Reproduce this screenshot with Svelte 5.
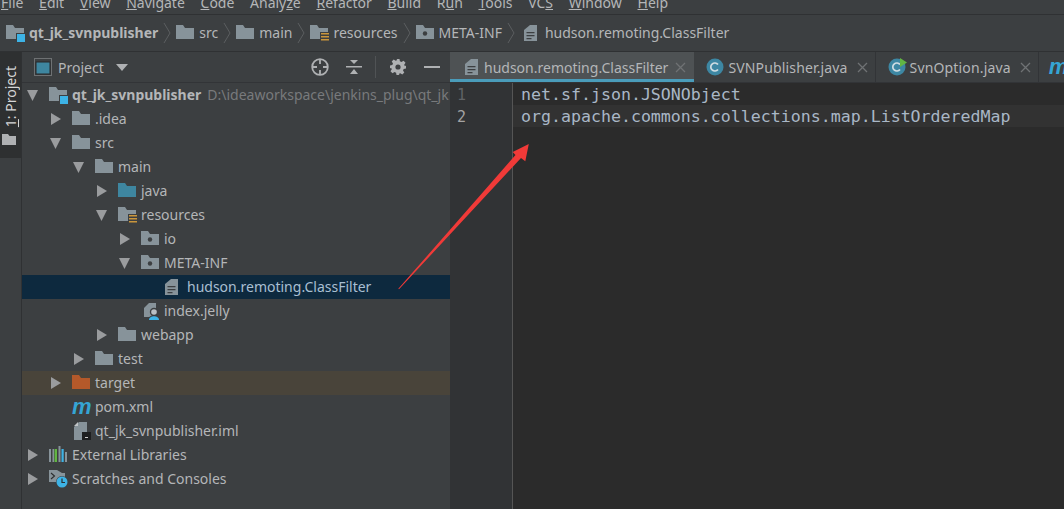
<script>
	// each entry: text before the mnemonic, the mnemonic, text after it
	const menus = [
		['', 'F', 'ile'], ['', 'E', 'dit'], ['', 'V', 'iew'], ['', 'N', 'avigate'], ['', 'C', 'ode'], ['Analy', 'z', 'e'],
		['', 'R', 'efactor'], ['', 'B', 'uild'], ['R', 'u', 'n'], ['', 'T', 'ools'], ['VC', 'S', ''], ['', 'W', 'indow'], ['', 'H', 'elp']
	];

	const crumbs = [
		{ icon: 'module', label: 'qt_jk_svnpublisher', bold: true },
		{ icon: 'folder', label: 'src' },
		{ icon: 'folder', label: 'main' },
		{ icon: 'resources', label: 'resources' },
		{ icon: 'package', label: 'META-INF' },
		{ icon: 'file', label: 'hudson.remoting.ClassFilter' }
	];

	const tree = [
		{ depth: 0, open: true, icon: 'module', label: 'qt_jk_svnpublisher', bold: true, path: 'D:\\ideaworkspace\\jenkins_plug\\qt_jk' },
		{ depth: 1, open: false, icon: 'folder', label: '.idea' },
		{ depth: 1, open: true, icon: 'folder', label: 'src' },
		{ depth: 2, open: true, icon: 'folder', label: 'main' },
		{ depth: 3, open: false, icon: 'java', label: 'java' },
		{ depth: 3, open: true, icon: 'resources', label: 'resources' },
		{ depth: 4, open: false, icon: 'package', label: 'io' },
		{ depth: 4, open: true, icon: 'package', label: 'META-INF' },
		{ depth: 5, icon: 'file', label: 'hudson.remoting.ClassFilter', kind: 'selected' },
		{ depth: 4, icon: 'jelly', label: 'index.jelly' },
		{ depth: 3, open: false, icon: 'folder', label: 'webapp' },
		{ depth: 2, open: false, icon: 'folder', label: 'test' },
		{ depth: 1, open: false, icon: 'target', label: 'target', kind: 'excluded' },
		{ depth: 1, icon: 'maven', label: 'pom.xml' },
		{ depth: 1, icon: 'iml', label: 'qt_jk_svnpublisher.iml' },
		{ depth: 0, open: false, icon: 'libs', label: 'External Libraries' },
		{ depth: 0, open: false, icon: 'scratch', label: 'Scratches and Consoles' }
	];

	const tabs = [
		{ icon: 'file', label: 'hudson.remoting.ClassFilter', active: true },
		{ icon: 'class', label: 'SVNPublisher.java' },
		{ icon: 'classrun', label: 'SvnOption.java' }
	];

	const lines = ['net.sf.json.JSONObject', 'org.apache.commons.collections.map.ListOrderedMap'];
</script>

{#snippet folderShape(fill)}
	<path d="M0 1h7l2 3h9v11H0z" fill={fill} />
{/snippet}

{#snippet icon(name)}
	{#if name === 'maven'}
		<span class="maven">m</span>
	{:else}
		<svg class="ico" width="20" height="18" viewBox="0 0 20 18">
			{#if name === 'folder'}
				{@render folderShape('#87939a')}
			{:else if name === 'java'}
				{@render folderShape('#3e86a0')}
			{:else if name === 'target'}
				{@render folderShape('#b4592a')}
			{:else if name === 'module'}
				{@render folderShape('#87939a')}
				<rect x="10" y="9" width="9" height="9" fill="#3c3f41" />
				<rect x="11" y="10" width="8" height="8" fill="#3db3e6" />
			{:else if name === 'resources'}
				{@render folderShape('#87939a')}
				<rect x="10" y="8" width="10" height="10" fill="#3c3f41" />
				<path d="M11 9h8v1.5h-8zM11 12h8v1.5h-8zM11 15h8v1.5h-8z" fill="#c9963c" />
			{:else if name === 'package'}
				{@render folderShape('#87939a')}
				<circle cx="9" cy="9.5" r="2.2" fill="#3c3f41" />
			{:else if name === 'file'}
				<path d="M7 1h7v16H1V6z" fill="#87939a" />
				<path d="M3.500 8h8v1.300h-8zM3.500 11h8v1.300h-8zM3.500 14h5v1.300h-5z" fill="#3c3f41" />
			{:else if name === 'jelly'}
				<path d="M8 1h7v14H3V6z" fill="#87939a" />
				<circle cx="13" cy="10" r="4.200" fill="#3c3f41" />
				<circle cx="13" cy="10" r="2.800" fill="#b9c0c4" />
				<path d="M7 18c0-6.500 12-6.500 12 0z" fill="#3c3f41" />
				<path d="M8 18c0-5 10-5 10 0z" fill="#3db3e6" />
			{:else if name === 'iml'}
				<path d="M7 0h8v18H2V5z" fill="#87939a" />
				<path d="M6 0v4H2z" fill="#c1c5c8" />
				<rect x="10" y="10" width="9" height="8" fill="#1e1f20" />
				<rect x="13" y="15" width="3" height="1" fill="#ccc" />
			{:else if name === 'libs'}
				<path d="M0 3h2v13H0zM3.500 3H5v13H3.500zM9.500 0h2v16h-2zM16 6h2v10h-2z" fill="#87939a" />
				<path d="M5.500 3H8v13H5.500z" fill="#62b543" />
				<path d="M12.500 3h2.200v13h-2.200z" fill="#3db3e6" />
			{:else if name === 'scratch'}
				<path d="M0 0h8l5 3h3v9H0z" fill="#87939a" />
				<path d="M2 3l3.500 3L2 9" fill="none" stroke="#2b2d2e" stroke-width="1.100" />
				<circle cx="13" cy="12" r="6" fill="#3c3f41" />
				<circle cx="13" cy="12" r="5.500" fill="#3db3e6" />
				<path d="M13 8.500V12.500h3" fill="none" stroke="#2b2d2e" stroke-width="1.200" />
			{:else if name === 'class' || name === 'classrun'}
				<circle cx="9" cy="9" r="8.500" fill="#3d87a3" />
				<path d="M12 6.600a4 4 0 1 0 0 4.800" fill="none" stroke="#cfdde3" stroke-width="1.700" />
				{#if name === 'classrun'}
					<path d="M12 0l7 4.500-7 4.500z" fill="#62b543" />
				{/if}
			{/if}
		</svg>
	{/if}
{/snippet}

<div class="ide">
	<nav class="menu">
		{#each menus as m}
			<span>{m[0]}<u>{m[1]}</u>{m[2]}</span>
		{/each}
	</nav>

	<div class="crumbs">
		{#each crumbs as c, i}
			{#if i > 0}
				<svg class="chev" width="8" height="22" viewBox="0 0 8 22"><path d="M1 1l6 10-6 10" fill="none" stroke="#5b5e60" /></svg>
			{/if}
			<span class="crumb" class:bold={c.bold}>{@render icon(c.icon)}{c.label}</span>
		{/each}
	</div>

	<div class="body">
		<aside class="stripe">
			<div class="stripe-active">
				<span class="vert"><u>1</u>: Project</span>
				<svg width="14" height="11" viewBox="0 0 14 11"><path d="M0 0h6l1.500 2H14v9H0z" fill="#afb1b3" /></svg>
			</div>
		</aside>

		<section class="panel">
			<header class="panel-head">
				<svg width="18" height="18" viewBox="0 0 18 18">
					<rect x="0.500" y="0.500" width="17" height="17" fill="none" stroke="#6e7173" />
					<rect x="2" y="4" width="14" height="12" fill="#3e86a0" stroke="#26292b" />
				</svg>
				<span class="panel-title">Project</span>
				<svg class="caret" width="12" height="7" viewBox="0 0 12 7"><path d="M0 0h12L6 7z" fill="#afb1b3" /></svg>
				<div class="panel-tools">
					<svg class="locate" width="18" height="18" viewBox="0 0 18 18" fill="none" stroke="#afb1b3" stroke-width="1.800">
						<circle cx="9" cy="9" r="7.800" />
						<path d="M9 1v5M9 12v5M1 9h5M12 9h5" />
					</svg>
					<svg width="16" height="16" viewBox="0 0 16 16" fill="#afb1b3">
						<path d="M0 7h16v1.500H0zM4 1h8L8 5zM8 10l4 5H4z" />
					</svg>
					<i class="tool-sep"></i>
					<svg class="gear" width="16" height="16" viewBox="0 0 16 16">
						<path d="M6.500 0h3l.4 2.300 1.600.7 2-1.300 2 2-1.300 2 .7 1.600L16 6.500v3l-2.300.4-.7 1.600 1.300 2-2 2-2-1.300-1.600.7L9.500 16h-3l-.4-2.300-1.600-.7-2 1.300-2-2 1.300-2-.7-1.600L0 9.500v-3l2.300-.4.7-1.600-1.300-2 2-2 2 1.300 1.600-.7z" fill="#afb1b3" />
						<circle cx="8" cy="8" r="2.600" fill="#3c3f41" />
					</svg>
					<svg width="16" height="16" viewBox="0 0 16 16"><rect y="7" width="16" height="2" fill="#afb1b3" /></svg>
				</div>
			</header>

			<ul class="tree">
				{#each tree as row}
					<li class="row {row.kind ?? ''}" style="padding-left: {row.depth * 23}px">
						<span class="arrow">
							{#if row.open === true}
								<svg width="12" height="11" viewBox="0 0 12 11"><path d="M0 0h11L5.500 11z" fill="#9a9c9e" /></svg>
							{:else if row.open === false}
								<svg width="12" height="12" viewBox="0 0 12 12"><path d="M1 0l10 6-10 6z" fill="#9a9c9e" /></svg>
							{/if}
						</span>
						<span class="row-icon">{@render icon(row.icon)}</span>
						<span class="row-label" class:bold={row.bold}>{row.label}</span>
						{#if row.path}<span class="row-label row-path">{row.path}</span>{/if}
					</li>
				{/each}
			</ul>
		</section>

		<section class="editor">
			<div class="tabs">
				{#each tabs as t}
					<div class="tab" class:active={t.active}>
						{@render icon(t.icon)}
						<span>{t.label}</span>
						<svg class="close" width="11" height="11" viewBox="0 0 11 11"><path d="M1 1l9 9M10 1l-9 9" stroke="#6f7274" stroke-width="1.300" /></svg>
					</div>
				{/each}
				<div class="tab-more"><span class="maven">m</span></div>
			</div>
			<div class="code">
				<div class="gutter">
					{#each lines as _, i}
						<div class="num" class:current={i === 1}>{i + 1}</div>
					{/each}
				</div>
				<div class="lines">
					{#each lines as line, i}
						<div class="line" class:current={i === 1}>{line}</div>
					{/each}
				</div>
			</div>
		</section>
	</div>

	<svg class="arrow-mark" width="1064" height="509" viewBox="0 0 1064 509">
		<path d="M398.300 288.800L515.500 155 512.700 152 528.800 144 525.300 161.300 521 158 399 289.300z" fill="#f03a38" />
	</svg>
</div>

<style>
	:global(body) {
		margin: 0;
		background: #3c3f41;
	}
	.ide {
		position: relative;
		width: 1064px;
		height: 509px;
		overflow: hidden;
		display: flex;
		flex-direction: column;
		background: #3c3f41;
		color: #b4b6b8;
		font-family: 'Noto Sans', sans-serif;
		font-size: 14px;
	}
	.menu {
		height: 14px;
		flex: none;
		display: flex;
		gap: 15.7px;
		padding-left: 1px;
		border-bottom: 1px solid #2f3133;
		overflow: hidden;
		line-height: 14px;
	}
	.menu span {
		margin-top: -4px;
		white-space: nowrap;
	}
	.crumbs {
		height: 36px;
		flex: none;
		display: flex;
		align-items: center;
		gap: 5px;
		padding-left: 6px;
		border-bottom: 1px solid #2f3133;
		white-space: nowrap;
	}
	.crumb {
		display: flex;
		align-items: center;
		gap: 3px;
		padding-bottom: 1px;
	}
	.crumb:last-child {
		margin-left: 3px;
		gap: 2px;
	}
	.bold {
		font-weight: 700;
	}
	.chev {
		flex: none;
	}
	.body {
		flex: 1;
		display: flex;
		min-height: 0;
	}
	.stripe {
		width: 21px;
		flex: none;
		border-right: 1px solid #2f3133;
	}
	.stripe-active {
		height: 106px;
		background: #2e3031;
		display: flex;
		flex-direction: column;
		align-items: center;
		padding-top: 14px;
		box-sizing: border-box;
		gap: 7px;
		color: #d5d6d7;
		font-size: 14px;
	}
	.stripe-active svg {
		margin-left: -3px;
	}
	.vert {
		writing-mode: vertical-rl;
		transform: rotate(180deg);
		line-height: 16px;
	}
	.panel {
		width: 428px;
		flex: none;
		overflow: hidden;
	}
	.panel-head {
		height: 30px;
		display: flex;
		align-items: center;
		padding-left: 12px;
		border-bottom: 1px solid #323437;
	}
	.panel-title {
		margin-left: 6px;
	}
	.caret {
		margin-left: 12px;
	}
	.panel-tools {
		margin-left: auto;
		display: flex;
		align-items: center;
		gap: 16px;
		padding-right: 10px;
	}
	.locate {
		margin-right: 1px;
	}
	.gear {
		margin-right: 2px;
	}
	.tool-sep {
		width: 1px;
		height: 22px;
		background: #505355;
		margin: 0 -2px 0 -3px;
	}
	.tree {
		list-style: none;
		margin: 0;
		padding: 0;
	}
	.row {
		height: 24px;
		display: flex;
		align-items: center;
		white-space: nowrap;
	}
	.row.selected {
		background: #0d293e;
	}
	.row.selected .row-label {
		color: #a9bfd2;
	}
	.row.excluded {
		background: #49443a;
	}
	.arrow {
		width: 27px;
		flex: none;
		display: flex;
		padding-left: 5px;
		box-sizing: border-box;
	}
	.row-icon {
		width: 23px;
		flex: none;
		display: flex;
		align-items: center;
	}
	.row-label {
		padding-bottom: 2px;
	}
	.row-path {
		margin-left: 6px;
		color: #787a7c;
	}
	.ico {
		display: block;
		flex: none;
		overflow: visible;
	}
	.maven {
		display: block;
		width: 20px;
		font: italic 700 22px/18px 'Liberation Sans', sans-serif;
		color: #35a5d5;
	}
	.editor {
		flex: 1;
		min-width: 0;
		display: flex;
		flex-direction: column;
		background: #2b2b2b;
	}
	.tabs {
		height: 30px;
		flex: none;
		display: flex;
		background: #3c3f41;
		border-bottom: 1px solid #323437;
		overflow: hidden;
		white-space: nowrap;
	}
	.tab {
		display: flex;
		align-items: center;
		gap: 2px;
		padding: 0 7px 0 12px;
		border-right: 1px solid #323437;
		letter-spacing: 0.15px;
	}
	.tab.active {
		gap: 0;
		padding: 0 8px 0 14px;
		background: #4e5254;
		box-shadow: inset 0 -3px 0 #4a9cba;
		border-right: none;
		letter-spacing: 0;
	}
	.close {
		margin-left: 7px;
	}
	.tab-more {
		display: flex;
		align-items: center;
		padding-left: 10px;
	}
	.code {
		flex: 1;
		display: flex;
		font: 16.6px/24px 'DejaVu Sans Mono', monospace;
	}
	.gutter {
		width: 62px;
		flex: none;
		background: #313335;
		border-right: 1px solid #555;
	}
	.num {
		height: 22px;
		padding-left: 7px;
		color: #606366;
		font-size: 15px;
	}
	.num.current {
		color: #a4a3a3;
	}
	.lines {
		flex: 1;
	}
	.line {
		height: 22px;
		padding-left: 8px;
		color: #a9b7c6;
		white-space: pre;
	}
	.line.current {
		background: #323232;
	}
	.arrow-mark {
		position: absolute;
		inset: 0;
		pointer-events: none;
	}
</style>
